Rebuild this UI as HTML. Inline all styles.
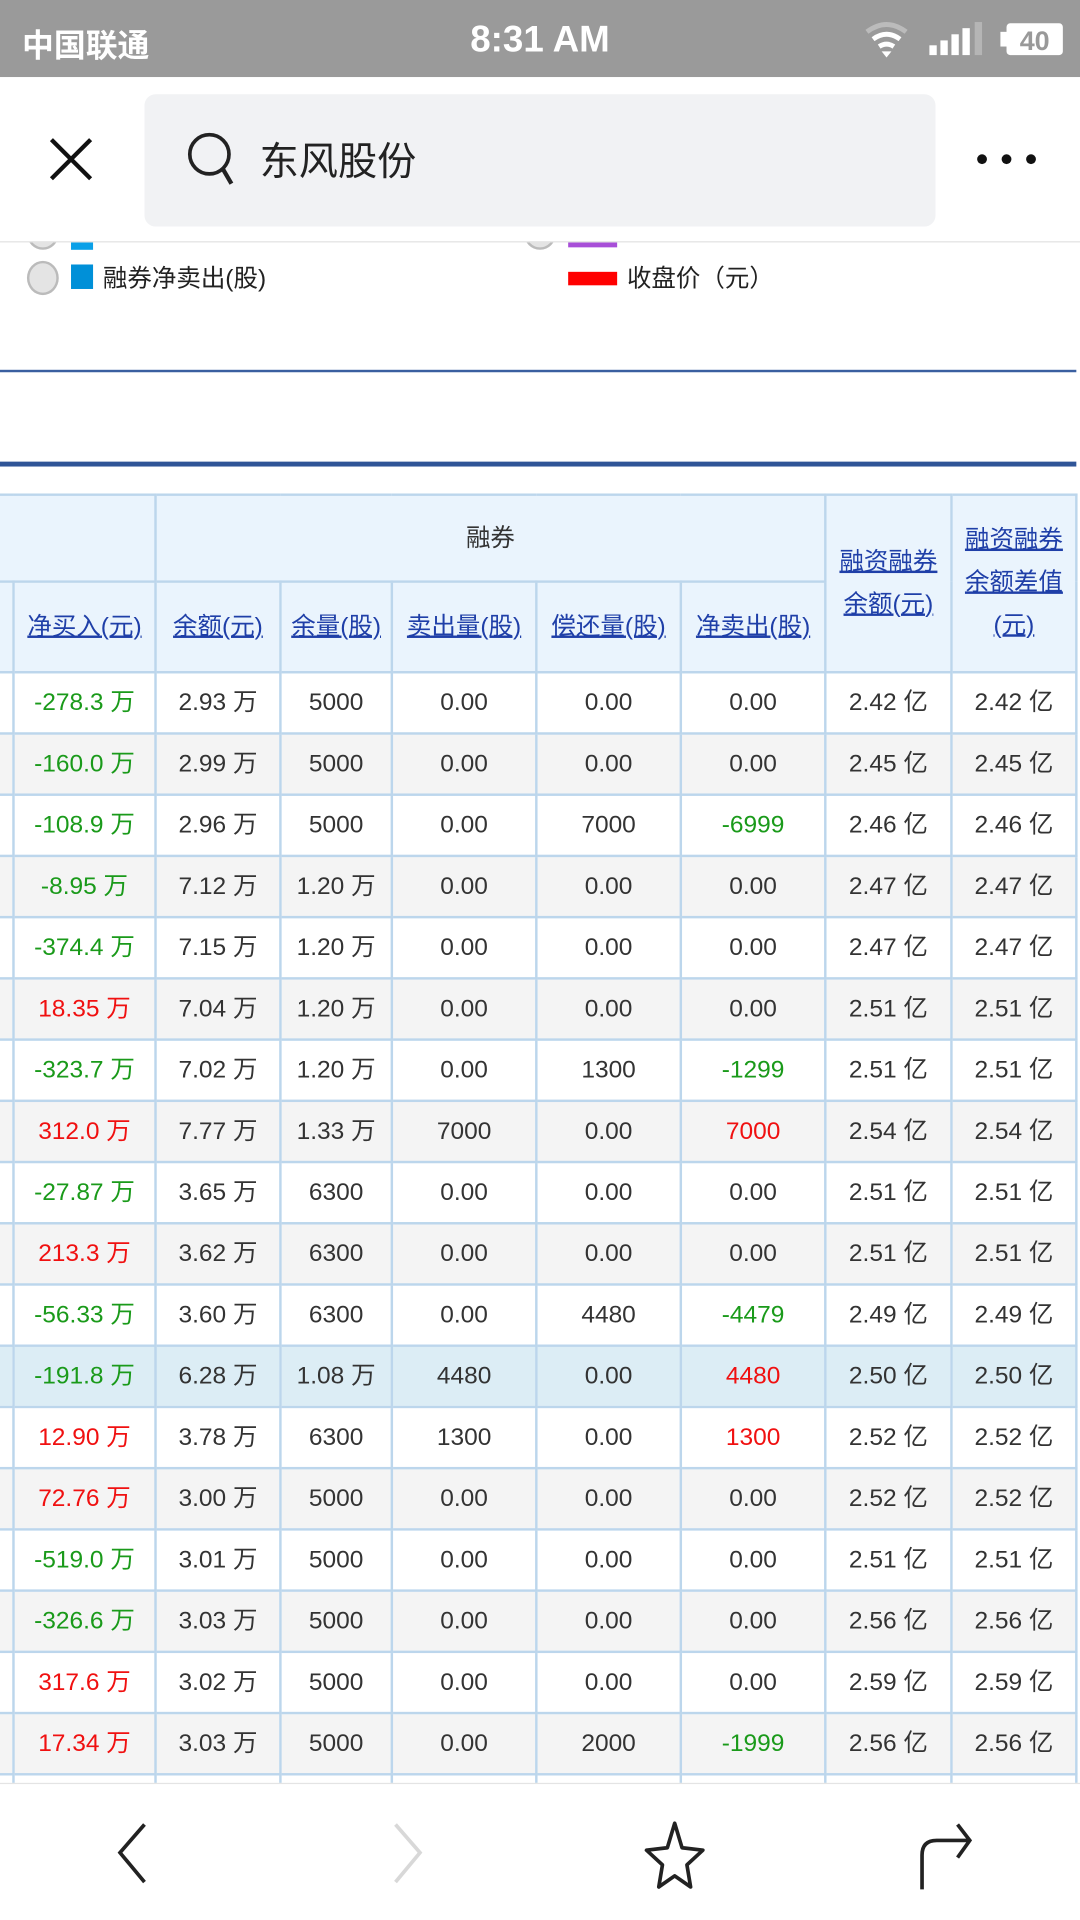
<!DOCTYPE html>
<html><head><meta charset="utf-8"><style>
*{margin:0;padding:0;box-sizing:border-box}
html,body{width:1080px;height:1920px;overflow:hidden;background:#fff}
#w{position:absolute;left:0;top:0;width:882px;height:1568px;transform:scale(1.2244898);transform-origin:0 0;overflow:hidden;font-family:"Liberation Sans","Noto Sans CJK SC",sans-serif;background:#fff}
.a{position:absolute}
#sb{left:0;top:0;width:882px;height:63px;background:#9a9a9a;color:#fff}
#nav{left:0;top:63px;width:882px;height:135px;background:#fff;border-bottom:1px solid #e2e2e2;z-index:5}
table{position:absolute;left:-100px;top:403px;border-collapse:collapse;table-layout:fixed;width:978px}
td,th{border:2px solid #bcd6ec;text-align:center;font-size:20px;line-height:20px;color:#333;font-weight:normal;height:50px;white-space:nowrap;overflow:hidden;vertical-align:middle}
td span,th span{display:inline-block;line-height:20px}
th{background:#eaf4fd}
th a{color:#1f3fa8;text-decoration:underline}
tr.g td{background:#f4f4f4}
tr.h td{background:#dcedf5}
.gr{color:#1a9a1a!important}.rd{color:#f01010!important}
#bt{left:0;top:1456px;width:882px;height:112px;background:#fff;border-top:1px solid #e4e4e4}
</style></head><body><div id="w">
<div id="sb" class="a">
 <div class="a" style="left:18px;top:17px;font-size:26px;font-weight:bold">中国联通</div>
 <div class="a" style="left:0;width:882px;top:16px;text-align:center;font-size:30px;font-weight:bold">8:31 AM</div>
 <svg class="a" style="left:700px;top:14px" width="182" height="36" viewBox="0 0 182 36">
  <path d="M8 12 Q24 0 40 12" stroke="#bbb" stroke-width="4" fill="none"/>
  <path d="M13 18 Q24 10 35 18" stroke="#fff" stroke-width="4" fill="none"/>
  <path d="M18 24 Q24 20 30 24" stroke="#fff" stroke-width="4" fill="none"/>
  <path d="M20 28 L28 28 L24 33Z" fill="#fff"/>
  <rect x="59" y="23" width="6" height="8" fill="#fff"/><rect x="68" y="19" width="6" height="12" fill="#fff"/>
  <rect x="77" y="14" width="6" height="17" fill="#fff"/><rect x="86" y="9" width="6" height="22" fill="#fff"/>
  <rect x="96" y="4" width="6" height="27" fill="#b5b5b5"/>
  <rect x="122" y="5" width="46" height="26" rx="3" fill="#fff"/><rect x="117" y="12" width="6" height="12" fill="#fff"/>
  <text x="145" y="27" text-anchor="middle" font-size="22" font-weight="bold" fill="#999" font-family="Liberation Sans">40</text>
 </svg>
</div>
<div id="nav" class="a">
 <svg class="a" style="left:38px;top:47px" width="40" height="40"><path d="M4 4L36 36M36 4L4 36" stroke="#111" stroke-width="3.5"/></svg>
 <div class="a" style="left:118px;top:14px;width:646px;height:108px;background:#f1f2f4;border-radius:9px">
  <svg class="a" style="left:34px;top:30px" width="44" height="46"><circle cx="19" cy="19" r="16" stroke="#222" stroke-width="3" fill="none"/><path d="M30 31L37 43" stroke="#222" stroke-width="3.5"/></svg>
  <div class="a" style="left:94px;top:30px;font-size:32px;color:#222">东风股份</div>
 </div>
 <svg class="a" style="left:795px;top:60px" width="56" height="14"><circle cx="7" cy="7" r="4" fill="#111"/><circle cx="27" cy="7" r="4" fill="#111"/><circle cx="47" cy="7" r="4" fill="#111"/></svg>
</div>
<div class="a" style="left:22px;top:178px;width:26px;height:26px;border-radius:50%;border:2px solid #bbb;background:#e4e4e4"></div>
<div class="a" style="left:58px;top:186px;width:18px;height:18px;background:#0aa0e8"></div>
<div class="a" style="left:428px;top:178px;width:26px;height:26px;border-radius:50%;border:2px solid #bbb;background:#e4e4e4"></div>
<div class="a" style="left:464px;top:194px;width:40px;height:8px;background:#a84fd8"></div>
<div class="a" style="left:22px;top:213px;width:26px;height:28px;border-radius:50%;border:2px solid #bbb;background:#e4e4e4"></div>
<div class="a" style="left:58px;top:216px;width:18px;height:20px;background:#0090d8"></div>
<div class="a" style="left:84px;top:211px;font-size:20px;color:#222">融券净卖出(股)</div>
<div class="a" style="left:464px;top:222px;width:40px;height:11px;background:#f00"></div>
<div class="a" style="left:512px;top:211px;font-size:20px;color:#222">收盘价（元）</div>
<div class="a" style="left:0;top:302px;width:879px;height:2px;background:#3a5fa0"></div>
<div class="a" style="left:0;top:377px;width:879px;height:4px;background:#2f5597"></div>
<table>
<colgroup><col style="width:110px"><col style="width:116px"><col style="width:102px"><col style="width:91px"><col style="width:118px"><col style="width:118px"><col style="width:118px"><col style="width:103px"><col style="width:102px"></colgroup>
<tr><th colspan="2" style="height:71px"></th><th colspan="5">融券</th><th rowspan="2" style="line-height:35px;white-space:normal"><a>融资融券<br>余额(元)</a></th><th rowspan="2" style="line-height:35px;white-space:normal"><a>融资融券<br>余额差值<br>(元)</a></th></tr>
<tr><th style="height:74px"></th><th><a>净买入(元)</a></th><th><a>余额(元)</a></th><th><a>余量(股)</a></th><th><a>卖出量(股)</a></th><th><a>偿还量(股)</a></th><th><a>净卖出(股)</a></th></tr>
<tr><td></td><td class="gr">-278.3 万</td><td>2.93 万</td><td>5000</td><td>0.00</td><td>0.00</td><td>0.00</td><td>2.42 亿</td><td>2.42 亿</td></tr>
<tr class="g"><td></td><td class="gr">-160.0 万</td><td>2.99 万</td><td>5000</td><td>0.00</td><td>0.00</td><td>0.00</td><td>2.45 亿</td><td>2.45 亿</td></tr>
<tr><td></td><td class="gr">-108.9 万</td><td>2.96 万</td><td>5000</td><td>0.00</td><td>7000</td><td class="gr">-6999</td><td>2.46 亿</td><td>2.46 亿</td></tr>
<tr class="g"><td></td><td class="gr">-8.95 万</td><td>7.12 万</td><td>1.20 万</td><td>0.00</td><td>0.00</td><td>0.00</td><td>2.47 亿</td><td>2.47 亿</td></tr>
<tr><td></td><td class="gr">-374.4 万</td><td>7.15 万</td><td>1.20 万</td><td>0.00</td><td>0.00</td><td>0.00</td><td>2.47 亿</td><td>2.47 亿</td></tr>
<tr class="g"><td></td><td class="rd">18.35 万</td><td>7.04 万</td><td>1.20 万</td><td>0.00</td><td>0.00</td><td>0.00</td><td>2.51 亿</td><td>2.51 亿</td></tr>
<tr><td></td><td class="gr">-323.7 万</td><td>7.02 万</td><td>1.20 万</td><td>0.00</td><td>1300</td><td class="gr">-1299</td><td>2.51 亿</td><td>2.51 亿</td></tr>
<tr class="g"><td></td><td class="rd">312.0 万</td><td>7.77 万</td><td>1.33 万</td><td>7000</td><td>0.00</td><td class="rd">7000</td><td>2.54 亿</td><td>2.54 亿</td></tr>
<tr><td></td><td class="gr">-27.87 万</td><td>3.65 万</td><td>6300</td><td>0.00</td><td>0.00</td><td>0.00</td><td>2.51 亿</td><td>2.51 亿</td></tr>
<tr class="g"><td></td><td class="rd">213.3 万</td><td>3.62 万</td><td>6300</td><td>0.00</td><td>0.00</td><td>0.00</td><td>2.51 亿</td><td>2.51 亿</td></tr>
<tr><td></td><td class="gr">-56.33 万</td><td>3.60 万</td><td>6300</td><td>0.00</td><td>4480</td><td class="gr">-4479</td><td>2.49 亿</td><td>2.49 亿</td></tr>
<tr class="h"><td></td><td class="gr">-191.8 万</td><td>6.28 万</td><td>1.08 万</td><td>4480</td><td>0.00</td><td class="rd">4480</td><td>2.50 亿</td><td>2.50 亿</td></tr>
<tr><td></td><td class="rd">12.90 万</td><td>3.78 万</td><td>6300</td><td>1300</td><td>0.00</td><td class="rd">1300</td><td>2.52 亿</td><td>2.52 亿</td></tr>
<tr class="g"><td></td><td class="rd">72.76 万</td><td>3.00 万</td><td>5000</td><td>0.00</td><td>0.00</td><td>0.00</td><td>2.52 亿</td><td>2.52 亿</td></tr>
<tr><td></td><td class="gr">-519.0 万</td><td>3.01 万</td><td>5000</td><td>0.00</td><td>0.00</td><td>0.00</td><td>2.51 亿</td><td>2.51 亿</td></tr>
<tr class="g"><td></td><td class="gr">-326.6 万</td><td>3.03 万</td><td>5000</td><td>0.00</td><td>0.00</td><td>0.00</td><td>2.56 亿</td><td>2.56 亿</td></tr>
<tr><td></td><td class="rd">317.6 万</td><td>3.02 万</td><td>5000</td><td>0.00</td><td>0.00</td><td>0.00</td><td>2.59 亿</td><td>2.59 亿</td></tr>
<tr class="g"><td></td><td class="rd">17.34 万</td><td>3.03 万</td><td>5000</td><td>0.00</td><td>2000</td><td class="gr">-1999</td><td>2.56 亿</td><td>2.56 亿</td></tr>
<tr><td></td><td></td><td></td><td></td><td></td><td></td><td></td><td></td><td></td></tr>
</table>
<div id="bt" class="a">
 <svg class="a" style="left:0;top:0" width="882" height="112">
  <path d="M118 33 L98 56 L118 80" stroke="#222" stroke-width="3" fill="none"/>
  <path d="M323 33 L343 56 L323 80" stroke="#d8d8d8" stroke-width="3" fill="none"/>
  <path d="M551 32 L557 52 L574 54 L561 66 L564 84 L551 75 L538 84 L541 66 L528 54 L545 52 Z" stroke="#222" stroke-width="3" fill="none" stroke-linejoin="round"/>
  <path d="M753 86 L753 58 Q753 46 765 46 L792 46 M782 33 L792 46 L782 60" stroke="#222" stroke-width="3" fill="none"/>
 </svg>
</div>
</div></body></html>
